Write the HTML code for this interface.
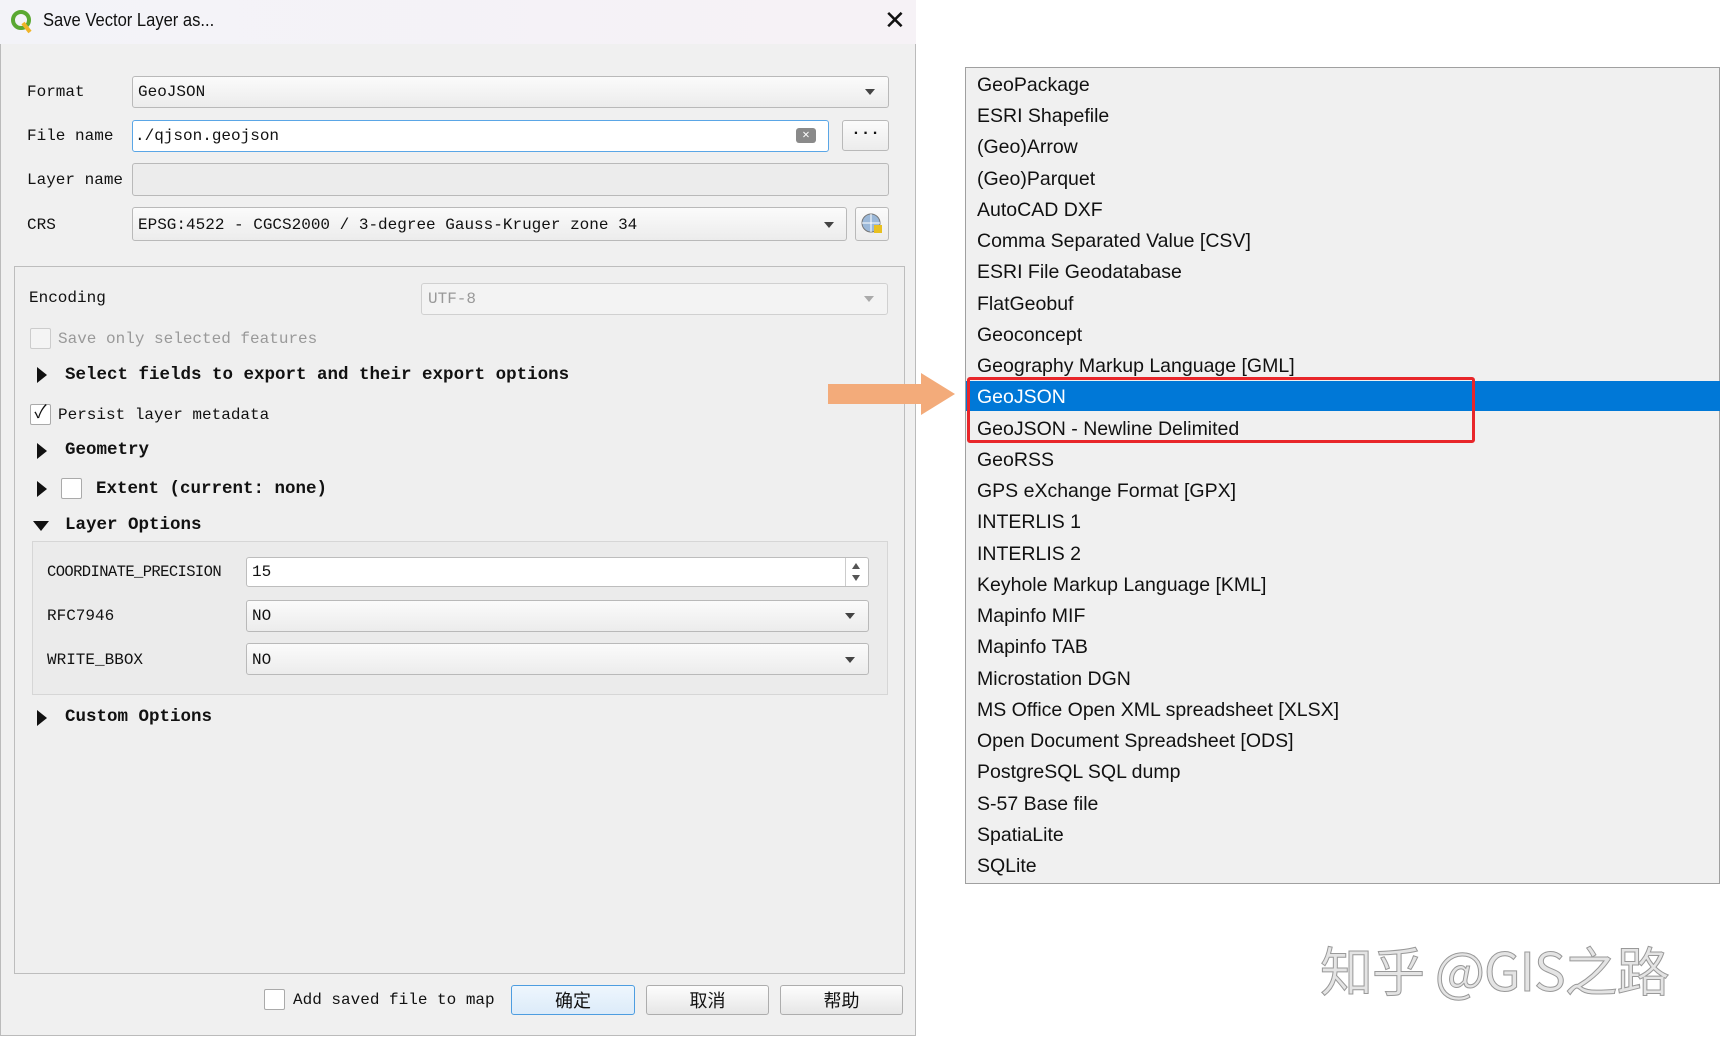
<!DOCTYPE html>
<html><head><meta charset="utf-8"><style>
*{box-sizing:border-box;margin:0;padding:0}
body{width:1720px;height:1038px;background:#fff;position:relative;overflow:hidden;font-family:"Liberation Mono","Noto Sans CJK SC",monospace;font-size:16px;color:#111}
.a{position:absolute}
.dlg{left:0;top:0;width:916px;height:1036px;background:#f0f0f0;border:1px solid #bbb}
.title{left:0;top:0;width:916px;height:44px;background:linear-gradient(90deg,#f3f3f8,#f6f2f6)}
.lbl{white-space:nowrap;line-height:20px}
.box{background:linear-gradient(#fbfbfb,#ececec);border:1px solid #b9b9b9;border-radius:3px}
.inp{background:#fff;border:1px solid #bdbdbd;border-radius:3px}
.dd{width:0;height:0;border-left:5px solid transparent;border-right:5px solid transparent;border-top:6px solid #444}
.b{font-weight:bold;font-size:17.5px}
.tri{width:0;height:0;border-top:8px solid transparent;border-bottom:8px solid transparent;border-left:10px solid #111}
.cb{width:21px;height:21px;border:1px solid #aaa;background:#fff;border-radius:2px}
.btn{background:linear-gradient(#fdfdfd,#e6e6e6);border:1px solid #adadad;border-radius:3px;text-align:center;line-height:28px;font-size:18px;font-family:"Noto Sans CJK SC",sans-serif}
.list{left:965px;top:67px;width:755px;height:817px;background:#f0f0f0;border:1px solid #a0a0a0}
.it{position:absolute;left:11px;font-family:"Liberation Sans","Noto Sans CJK SC",sans-serif;font-size:19.5px;line-height:31px;color:#111;white-space:nowrap}
</style></head><body>
<div class="a dlg"></div>
<div class="a title"></div>
<svg class="a" style="left:10px;top:9px" width="24" height="26" viewBox="0 0 24 26"><circle cx="11" cy="11" r="8" fill="none" stroke="#5aa832" stroke-width="4"/><path d="M13 14 L20 23" stroke="#f0b429" stroke-width="4"/></svg>
<div class="a lbl" style="left:43px;top:10px;font-family:'Liberation Sans',sans-serif;font-size:18px;transform:scaleX(.92);transform-origin:left">Save Vector Layer as...</div>
<div class="a" style="left:884px;top:5px;font-family:'Liberation Sans',sans-serif;font-size:26px;font-weight:300">✕</div>

<div class="a lbl" style="left:27px;top:82px">Format</div>
<div class="a box" style="left:132px;top:76px;width:757px;height:32px"></div>
<div class="a lbl" style="left:138px;top:82px">GeoJSON</div>
<div class="a dd" style="left:865px;top:89px"></div>

<div class="a lbl" style="left:27px;top:126px">File name</div>
<div class="a inp" style="left:132px;top:120px;width:697px;height:32px;border-color:#5aa6e6"></div>
<div class="a lbl" style="left:135px;top:126px">./qjson.geojson</div>
<div class="a" style="left:796px;top:128px;width:20px;height:15px;background:#8a8a8a;border-radius:3px;color:#fff;font-size:12px;line-height:15px;text-align:center">✕</div>
<div class="a box" style="left:842px;top:120px;width:47px;height:31px;text-align:center;font-weight:bold;line-height:24px">···</div>

<div class="a lbl" style="left:27px;top:170px">Layer name</div>
<div class="a box" style="left:132px;top:163px;width:757px;height:33px;background:#ececec"></div>

<div class="a lbl" style="left:27px;top:215px">CRS</div>
<div class="a box" style="left:132px;top:207px;width:715px;height:34px"></div>
<div class="a lbl" style="left:138px;top:215px">EPSG:4522 - CGCS2000 / 3-degree Gauss-Kruger zone 34</div>
<div class="a dd" style="left:824px;top:222px"></div>
<div class="a box" style="left:855px;top:207px;width:34px;height:34px"></div>
<svg class="a" style="left:860px;top:212px" width="24" height="24"><circle cx="11" cy="11" r="9" fill="#9bb8d8" stroke="#777"/><path d="M2 11h18M11 2v18" stroke="#fff"/><rect x="14" y="13" width="8" height="8" fill="#e8c020"/></svg>

<div class="a" style="left:14px;top:266px;width:891px;height:708px;border:1px solid #bdbdbd;background:#efefef"></div>
<div class="a lbl" style="left:29px;top:288px">Encoding</div>
<div class="a box" style="left:421px;top:283px;width:467px;height:32px;background:#f3f3f3;border-color:#d0d0d0"></div>
<div class="a lbl" style="left:428px;top:289px;color:#999">UTF-8</div>
<div class="a dd" style="left:864px;top:296px;border-top-color:#aaa"></div>

<div class="a cb" style="left:30px;top:328px;border-color:#ccc;background:#f4f4f4"></div>
<div class="a lbl" style="left:58px;top:329px;color:#999">Save only selected features</div>
<div class="a tri" style="left:37px;top:367px"></div>
<div class="a lbl b" style="left:65px;top:365px">Select fields to export and their export options</div>
<div class="a cb" style="left:30px;top:404px;font-size:18px;line-height:19px;text-align:center">✓</div>
<div class="a lbl" style="left:58px;top:405px">Persist layer metadata</div>
<div class="a tri" style="left:37px;top:443px"></div>
<div class="a lbl b" style="left:65px;top:440px">Geometry</div>
<div class="a tri" style="left:37px;top:481px"></div>
<div class="a cb" style="left:61px;top:478px"></div>
<div class="a lbl b" style="left:96px;top:479px">Extent (current: none)</div>
<div class="a" style="left:33px;top:521px;width:0;height:0;border-left:8px solid transparent;border-right:8px solid transparent;border-top:10px solid #111"></div>
<div class="a lbl b" style="left:65px;top:515px">Layer Options</div>

<div class="a" style="left:32px;top:541px;width:856px;height:154px;border:1px solid #d6d6d6;background:#ebebeb"></div>
<div class="a lbl" style="left:47px;top:562px;font-size:15.5px;letter-spacing:-.6px">COORDINATE_PRECISION</div>
<div class="a inp" style="left:246px;top:557px;width:623px;height:30px"></div>
<div class="a lbl" style="left:252px;top:562px">15</div>
<div class="a" style="left:845px;top:558px;width:1px;height:28px;background:#ccc"></div>
<div class="a" style="left:852px;top:563px;width:0;height:0;border-left:4px solid transparent;border-right:4px solid transparent;border-bottom:6px solid #555"></div>
<div class="a" style="left:852px;top:575px;width:0;height:0;border-left:4px solid transparent;border-right:4px solid transparent;border-top:6px solid #555"></div>
<div class="a lbl" style="left:47px;top:606px">RFC7946</div>
<div class="a box" style="left:246px;top:600px;width:623px;height:32px"></div>
<div class="a lbl" style="left:252px;top:606px">NO</div>
<div class="a dd" style="left:845px;top:613px"></div>
<div class="a lbl" style="left:47px;top:650px">WRITE_BBOX</div>
<div class="a box" style="left:246px;top:643px;width:623px;height:32px"></div>
<div class="a lbl" style="left:252px;top:650px">NO</div>
<div class="a dd" style="left:845px;top:657px"></div>

<div class="a tri" style="left:37px;top:710px"></div>
<div class="a lbl b" style="left:65px;top:707px">Custom Options</div>

<div class="a cb" style="left:264px;top:989px"></div>
<div class="a lbl" style="left:293px;top:990px">Add saved file to map</div>
<div class="a btn" style="left:511px;top:985px;width:124px;height:30px;border-color:#4d9de0;background:linear-gradient(#eef6fd,#dcebf9)">确定</div>
<div class="a btn" style="left:646px;top:985px;width:123px;height:30px">取消</div>
<div class="a btn" style="left:780px;top:985px;width:123px;height:30px">帮助</div>

<div class="a" style="left:828px;top:384px;width:94px;height:20px;background:#f3ab7a"></div>
<div class="a" style="left:921px;top:373px;width:0;height:0;border-top:21px solid transparent;border-bottom:21px solid transparent;border-left:34px solid #f3ab7a"></div>

<div class="a list">
<div class="a" style="left:0;top:313px;width:754px;height:30px;background:#0078d7"></div>
<div class="it" style="top:2px">GeoPackage</div>
<div class="it" style="top:33px">ESRI Shapefile</div>
<div class="it" style="top:64px">(Geo)Arrow</div>
<div class="it" style="top:96px">(Geo)Parquet</div>
<div class="it" style="top:127px">AutoCAD DXF</div>
<div class="it" style="top:158px">Comma Separated Value [CSV]</div>
<div class="it" style="top:189px">ESRI File Geodatabase</div>
<div class="it" style="top:221px">FlatGeobuf</div>
<div class="it" style="top:252px">Geoconcept</div>
<div class="it" style="top:283px">Geography Markup Language [GML]</div>
<div class="it" style="top:314px;color:#fff">GeoJSON</div>
<div class="it" style="top:346px">GeoJSON - Newline Delimited</div>
<div class="it" style="top:377px">GeoRSS</div>
<div class="it" style="top:408px">GPS eXchange Format [GPX]</div>
<div class="it" style="top:439px">INTERLIS 1</div>
<div class="it" style="top:471px">INTERLIS 2</div>
<div class="it" style="top:502px">Keyhole Markup Language [KML]</div>
<div class="it" style="top:533px">Mapinfo MIF</div>
<div class="it" style="top:564px">Mapinfo TAB</div>
<div class="it" style="top:596px">Microstation DGN</div>
<div class="it" style="top:627px">MS Office Open XML spreadsheet [XLSX]</div>
<div class="it" style="top:658px">Open Document Spreadsheet [ODS]</div>
<div class="it" style="top:689px">PostgreSQL SQL dump</div>
<div class="it" style="top:721px">S-57 Base file</div>
<div class="it" style="top:752px">SpatiaLite</div>
<div class="it" style="top:783px">SQLite</div>
</div>
<div class="a" style="left:967px;top:377px;width:508px;height:66px;border:3px solid #e8262a;border-radius:3px"></div>

<div class="a lbl" style="left:1320px;top:938px;font-family:'Noto Sans CJK SC',sans-serif;font-size:53px;line-height:62px;color:#e4e4e4;-webkit-text-stroke:1px #999;letter-spacing:-1px">知乎 @GIS之路</div>
</body></html>
